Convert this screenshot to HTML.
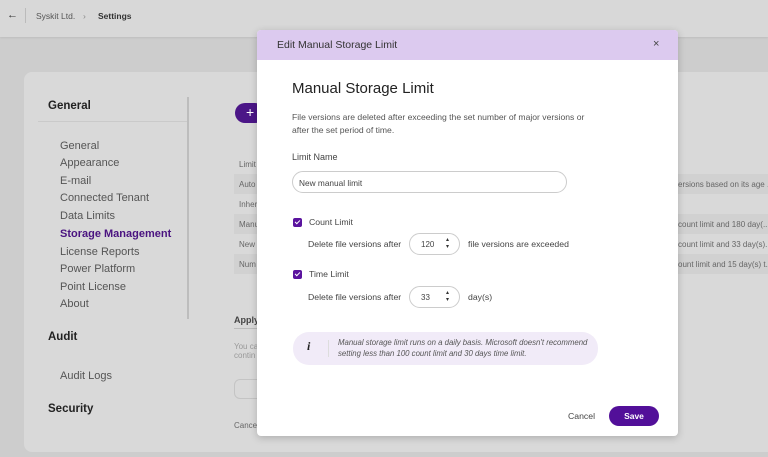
<!DOCTYPE html>
<html><head><meta charset="utf-8"><style>
*{box-sizing:border-box;margin:0;padding:0}
body{width:768px;height:457px;overflow:hidden;background:#cdcdcd;font-family:"Liberation Sans",sans-serif;position:relative;color:#333}
.top{position:absolute;left:0;top:0;width:768px;height:37px;background:#d8d8d8;box-shadow:0 1px 2px rgba(0,0,0,.08)}
.abs{position:absolute;white-space:nowrap}
.card{position:absolute;left:24px;top:72px;width:760px;height:380px;background:#d9d9d9;border-radius:8px}
.nav{font-size:11px;color:#555}
.row{position:absolute;left:234px;height:20px;width:540px;background:#d1d1d1}
.t{font-size:8px;color:#666}
.modal{position:absolute;left:257px;top:30px;width:421px;height:406px;background:#fff;border-radius:4px;overflow:hidden;box-shadow:0 2px 8px rgba(0,0,0,.2)}
.mh{height:30px;background:#dccaef;position:relative}
.lbl{font-size:9px;color:#444}
.cb{position:absolute;width:9px;height:9px;background:#5a139e;border-radius:2px}
.cb:after{content:"";position:absolute;left:3px;top:1px;width:2px;height:4px;border:solid #fff;border-width:0 1px 1px 0;transform:rotate(45deg)}
.num{position:absolute;width:51px;height:22px;border:1px solid #ccc;border-radius:11px;font-size:8px;padding:6px 0 0 11px;color:#444}
.num span{position:absolute;right:10px;top:3px;font-size:6px;line-height:7px;color:#333}
</style></head><body>
<div class="top"></div>
<div class="abs" style="left:7px;top:9px;font-size:11px;color:#333">←</div>
<div class="abs" style="left:25px;top:8px;width:1px;height:15px;background:#bbb"></div>
<div class="abs" style="left:36px;top:11px;font-size:8.5px;color:#555">Syskit Ltd.</div>
<div class="abs" style="left:83px;top:11px;font-size:8.5px;color:#888">›</div>
<div class="abs" style="left:98px;top:11px;font-size:8.5px;font-weight:bold;color:#333">Settings</div>
<div class="card"></div>
<div class="abs" style="left:187px;top:97px;width:2px;height:222px;background:#bdbdbd"></div>
<div class="abs" style="left:38px;top:121px;width:149px;height:1px;background:#cacaca"></div>
<div class="abs" style="left:48px;top:100px;font-size:11.5px;font-weight:bold;color:#222">General</div>
<div class="abs nav" style="left:60px;top:140px">General</div>
<div class="abs nav" style="left:60px;top:157px">Appearance</div>
<div class="abs nav" style="left:60px;top:175px">E-mail</div>
<div class="abs nav" style="left:60px;top:192px">Connected Tenant</div>
<div class="abs nav" style="left:60px;top:210px">Data Limits</div>
<div class="abs nav" style="left:60px;top:228px;color:#4a1380;font-weight:bold">Storage Management</div>
<div class="abs nav" style="left:60px;top:246px">License Reports</div>
<div class="abs nav" style="left:60px;top:263px">Power Platform</div>
<div class="abs nav" style="left:60px;top:281px">Point License</div>
<div class="abs nav" style="left:60px;top:298px">About</div>
<div class="abs" style="left:48px;top:331px;font-size:11.5px;font-weight:bold;color:#222">Audit</div>
<div class="abs nav" style="left:60px;top:370px">Audit Logs</div>
<div class="abs" style="left:48px;top:403px;font-size:11.5px;font-weight:bold;color:#222">Security</div>
<div class="abs" style="left:235px;top:103px;width:30px;height:20px;border-radius:10px;background:#4b1687;color:#fff;font-size:14px;padding-left:11px;line-height:19px">+</div>
<div class="abs t" style="left:239px;top:160px">Limit</div>
<div class="row" style="top:174px"></div><div class="abs t" style="left:239px;top:180px">Auto</div>
<div class="abs t" style="left:239px;top:200px">Inher</div>
<div class="row" style="top:214px"></div><div class="abs t" style="left:239px;top:220px">Manu</div>
<div class="abs t" style="left:239px;top:240px">New</div>
<div class="row" style="top:254px"></div><div class="abs t" style="left:239px;top:260px">Num</div>
<div class="abs t" style="left:678px;top:180px">ersions based on its age ..</div>
<div class="abs t" style="left:678px;top:220px">count limit and 180 day(..</div>
<div class="abs t" style="left:678px;top:240px">count limit and 33 day(s).</div>
<div class="abs t" style="left:678px;top:260px">ount limit and 15 day(s) t.</div>
<div class="abs" style="left:234px;top:315px;font-size:9px;font-weight:bold;color:#444">Apply</div>
<div class="abs" style="left:234px;top:328px;width:30px;height:1px;background:#bbb"></div>
<div class="abs t" style="left:234px;top:342px;color:#999">You ca<br>contin</div>
<div class="abs" style="left:234px;top:379px;width:30px;height:20px;border:1px solid #c4c4c4;border-radius:6px"></div>
<div class="abs t" style="left:234px;top:421px">Cance</div>
<div class="modal">
<div class="mh"><div class="abs" style="left:20px;top:9px;font-size:10.5px;color:#333">Edit Manual Storage Limit</div><div class="abs" style="left:396px;top:8px;font-size:11px;color:#444">×</div></div>
<div class="abs" style="left:35px;top:50px;font-size:15px;color:#222">Manual Storage Limit</div>
<div class="abs" style="left:35px;top:81px;font-size:8.6px;color:#555;line-height:12.5px">File versions are deleted after exceeding the set number of major versions or<br>after the set period of time.</div>
<div class="abs lbl" style="left:35px;top:122px">Limit Name</div>
<div class="abs" style="left:35px;top:141px;width:275px;height:22px;border:1px solid #ccc;border-radius:11px;font-size:8.3px;padding:6px 0 0 6px;color:#444">New manual limit</div>
<div class="cb" style="left:36px;top:188px"></div><div class="abs lbl" style="left:52px;top:187px;font-size:8.7px">Count Limit</div>
<div class="abs lbl" style="left:51px;top:209px;font-size:8.7px">Delete file versions after</div>
<div class="num" style="left:152px;top:203px">120<span>▴<br>▾</span></div>
<div class="abs lbl" style="left:211px;top:209px;font-size:8.7px">file versions are exceeded</div>
<div class="cb" style="left:36px;top:240px"></div><div class="abs lbl" style="left:52px;top:239px;font-size:8.7px">Time Limit</div>
<div class="abs lbl" style="left:51px;top:262px;font-size:8.7px">Delete file versions after</div>
<div class="num" style="left:152px;top:256px">33<span>▴<br>▾</span></div>
<div class="abs lbl" style="left:211px;top:262px;font-size:8.7px">day(s)</div>
<div class="abs" style="left:36px;top:302px;width:305px;height:33px;border-radius:16px;background:#f1ebf8"></div>
<div class="abs" style="left:50px;top:309px;font-size:12px;font-style:italic;font-weight:bold;font-family:'Liberation Serif',serif;color:#222">i</div>
<div class="abs" style="left:71px;top:310px;width:1px;height:17px;background:#ddd"></div>
<div class="abs" style="left:81px;top:307px;font-size:7.8px;font-style:italic;color:#555;line-height:11px">Manual storage limit runs on a daily basis. Microsoft doesn't recommend<br>setting less than 100 count limit and 30 days time limit.</div>
<div class="abs" style="left:311px;top:381px;font-size:8.7px;color:#444">Cancel</div>
<div class="abs" style="left:352px;top:376px;width:50px;height:20px;border-radius:10px;background:#520f99;color:#fff;font-size:8.5px;font-weight:bold;text-align:center;line-height:20px">Save</div>
</div>
</body></html>
